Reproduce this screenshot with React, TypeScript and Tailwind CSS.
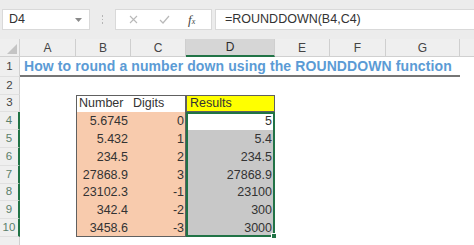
import React from 'react';

const font = { fontFamily: '"Liberation Sans", Arial, sans-serif' };

const columns = ['A', 'B', 'C', 'D', 'E', 'F', 'G'];

const rows = [
  { number: '5.6745', digits: '0', result: '5' },
  { number: '5.432', digits: '1', result: '5.4' },
  { number: '234.5', digits: '2', result: '234.5' },
  { number: '27868.9', digits: '3', result: '27868.9' },
  { number: '23102.3', digits: '-1', result: '23100' },
  { number: '342.4', digits: '-2', result: '300' },
  { number: '3458.6', digits: '-3', result: '3000' },
];

const colStart = ['col-start-1', 'col-start-2', 'col-start-3', 'col-start-4', 'col-start-5', 'col-start-6', 'col-start-7', 'col-start-8', 'col-start-9'];
const rowStart = ['row-start-1', 'row-start-2', 'row-start-3', 'row-start-4', 'row-start-5', 'row-start-6', 'row-start-7', 'row-start-8', 'row-start-9', 'row-start-10', 'row-start-11', 'row-start-12'];

function Toolbar() {
  return (
    <div className="flex h-[39px] items-center bg-[#ececec] pl-[2px]">
      <div className="flex h-[21px] w-[88px] items-center justify-between border border-[#d9d9d9] bg-white pl-[6px] pr-[7px] text-[12.5px] text-[#333]">
        <span>D4</span>
        <svg width="7" height="4" viewBox="0 0 7 4">
          <path d="M0 0h7L3.5 4z" fill="#8a8a8a" />
        </svg>
      </div>
      <div className="flex w-[25px] flex-col items-center gap-[2px]">
        <div className="size-[1.5px] bg-[#b5b5b5]" />
        <div className="size-[1.5px] bg-[#b5b5b5]" />
        <div className="size-[1.5px] bg-[#b5b5b5]" />
      </div>
      <div className="flex h-[21px] w-[97px] items-center border border-[#d9d9d9] bg-white">
        <svg className="ml-[13px]" width="9" height="9" viewBox="0 0 9 9">
          <path d="M1 1l7 7M8 1L1 8" stroke="#b9b9b9" strokeWidth="1.1" />
        </svg>
        <svg className="ml-[21px]" width="11" height="9" viewBox="0 0 11 9">
          <path d="M1 5l3 3 6-7" stroke="#b9b9b9" strokeWidth="1.2" fill="none" />
        </svg>
        <span
          className="ml-[18px] text-[13px] italic leading-none text-[#444]"
          style={{ fontFamily: '"Liberation Serif", serif' }}
        >
          f<span className="text-[8px]">x</span>
        </span>
      </div>
      <div className="ml-[3px] flex h-[21px] flex-1 items-center border border-r-0 border-[#d9d9d9] bg-white pl-[9px] text-[12.5px] text-[#333]">
        =ROUNDDOWN(B4,C4)
      </div>
    </div>
  );
}

export default function App() {
  return (
    <div className="h-[245px] w-[474px] overflow-hidden bg-white" style={font}>
      <Toolbar />
      <div className="grid grid-cols-[20px_56px_55px_55px_89px_55px_56px_74px_1fr] grid-rows-[18px_20px_18px_17px_18px_18px_18px_18px_17px_18px_18px_18px]">
        {/* corner */}
        <div className="col-start-1 row-start-1 flex items-end justify-end border-r border-b border-[#d0d0d0] bg-[#efefef] p-[2px]">
          <svg width="10" height="10" viewBox="0 0 10 10">
            <path d="M10 0v10H0z" fill="#c4c4c4" />
          </svg>
        </div>

        {/* column headers */}
        {columns.map((letter, i) => (
          <div
            key={letter}
            className={`${colStart[i + 1]} row-start-1 flex items-center justify-center border-r border-[#cfcfcf] text-[12px] ${
              letter === 'D'
                ? 'border-b-2 border-b-[#217346] bg-[#d6d6d6] text-[#2a2a2a]'
                : 'border-b border-b-[#d0d0d0] bg-[#efefef] text-[#444]'
            }`}
          >
            {letter}
          </div>
        ))}
        <div className="col-start-9 row-start-1 border-b border-[#d0d0d0] bg-[#efefef]" />

        {/* row headers */}
        {Array.from({ length: 11 }, (_, i) => i + 1).map((n) => (
          <div
            key={n}
            className={`${colStart[0]} ${rowStart[n]} flex items-center justify-center border-b border-[#e0e0e0] bg-[#efefef] text-[11.5px] ${
              n >= 4 && n <= 10
                ? 'border-r-2 border-r-[#217346] text-[#5b7f6b]'
                : 'border-r border-r-[#d0d0d0] text-[#444]'
            }`}
          >
            {n <= 10 ? n : ''}
          </div>
        ))}

        {/* title row */}
        <div className="col-start-2 col-span-7 row-start-2 flex items-center border-b-2 border-[#757575] pl-[4px] text-[14px] font-bold tracking-[0.1px] text-[#5b9bd5]">
          How to round a number down using the ROUNDDOWN function
        </div>

        {/* headings row 3 */}
        <div className="col-start-3 row-start-4 flex items-center pl-[3px] text-[12.5px] text-[#333]">
          Number
        </div>
        <div className="col-start-4 row-start-4 flex items-center pl-[2px] text-[12.5px] text-[#333]">
          Digits
        </div>
        <div className="col-start-5 row-start-4 flex items-center border border-[#606060] bg-[#ffff00] pl-[3px] text-[12.5px] text-[#333]">
          Results
        </div>

        {/* data */}
        {rows.map((row, i) => (
          <React.Fragment key={row.number}>
            <div
              className={`col-start-3 ${rowStart[i + 4]} flex items-center justify-end bg-[#f8cbad] pr-[3px] text-[12.5px] text-[#333]`}
            >
              {row.number}
            </div>
            <div
              className={`col-start-4 ${rowStart[i + 4]} flex items-center justify-end bg-[#f8cbad] pr-[2px] text-[12.5px] text-[#333]`}
            >
              {row.digits}
            </div>
            <div
              className={`col-start-5 ${rowStart[i + 4]} flex items-center justify-end pr-[3px] text-[12.5px] text-[#333] ${
                i === 0 ? 'bg-white' : 'bg-[#c8c8c8]'
              }`}
            >
              {row.result}
            </div>
          </React.Fragment>
        ))}

        {/* table outline */}
        <div className="pointer-events-none col-start-3 col-span-2 row-start-4 row-span-8 border border-[#606060]" />

        {/* selection */}
        <div className="pointer-events-none relative col-start-5 row-start-5 row-span-7 border-2 border-[#217346]">
          <div className="absolute -right-[4px] -bottom-[4px] size-[6px] border border-white bg-[#217346]" />
        </div>
      </div>
    </div>
  );
}
